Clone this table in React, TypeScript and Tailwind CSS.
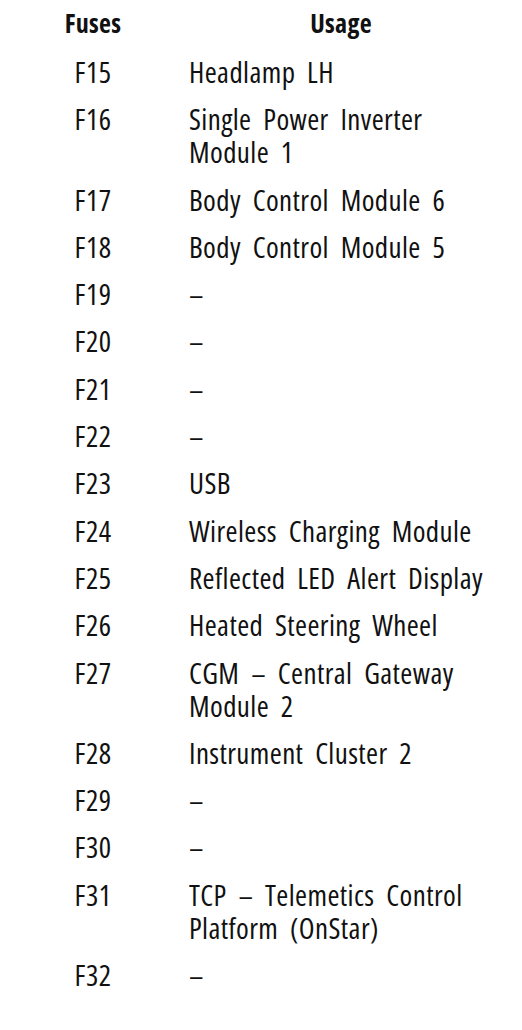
const ROWS: { fuse: string; usage: string[] }[] = [
  { fuse: 'F15', usage: ['Headlamp LH'] },
  { fuse: 'F16', usage: ['Single Power Inverter', 'Module 1'] },
  { fuse: 'F17', usage: ['Body Control Module 6'] },
  { fuse: 'F18', usage: ['Body Control Module 5'] },
  { fuse: 'F19', usage: ['–'] },
  { fuse: 'F20', usage: ['–'] },
  { fuse: 'F21', usage: ['–'] },
  { fuse: 'F22', usage: ['–'] },
  { fuse: 'F23', usage: ['USB'] },
  { fuse: 'F24', usage: ['Wireless Charging Module'] },
  { fuse: 'F25', usage: ['Reflected LED Alert Display'] },
  { fuse: 'F26', usage: ['Heated Steering Wheel'] },
  { fuse: 'F27', usage: ['CGM – Central Gateway', 'Module 2'] },
  { fuse: 'F28', usage: ['Instrument Cluster 2'] },
  { fuse: 'F29', usage: ['–'] },
  { fuse: 'F30', usage: ['–'] },
  { fuse: 'F31', usage: ['TCP – Telemetics Control', 'Platform (OnStar)'] },
  { fuse: 'F32', usage: ['–'] },
]

export default function App() {
  return (
    <div className="min-h-[1030px] w-[522px] bg-white pt-[7px] font-['Open_Sans',sans-serif] text-[#111] [font-stretch:81%]">
      <div className="grid grid-cols-[186px_304px] gap-x-[3px] text-[26px] font-bold leading-[32px] tracking-[0.3px]">
        <div className="text-center">Fuses</div>
        <div className="text-center">Usage</div>
      </div>

      <div className="mt-[16px] flex flex-col gap-[14.3px] text-[29px] font-medium leading-[33px] tracking-[0.4px] [word-spacing:6px]">
        {ROWS.map(r => (
          <div key={r.fuse} className="grid grid-cols-[186px_1fr] gap-x-[3px]">
            <div className="text-center">{r.fuse}</div>
            <div className="flex flex-col whitespace-nowrap">
              {r.usage.map(line => (
                <span key={line}>{line}</span>
              ))}
            </div>
          </div>
        ))}
      </div>
    </div>
  )
}
